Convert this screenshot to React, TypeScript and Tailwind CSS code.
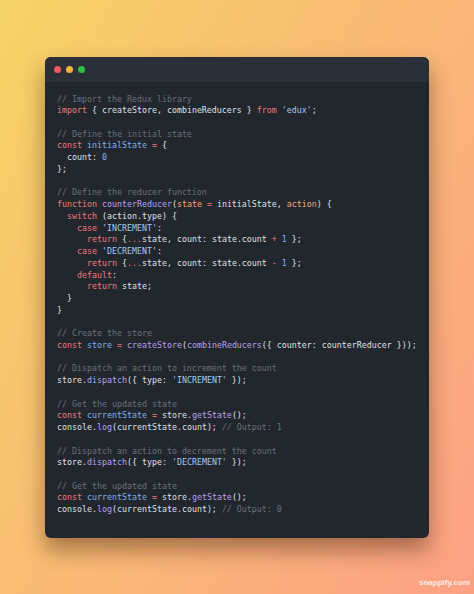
import React from "react";

type Tok = [string, string];

const C = {
  c: "text-[#6a717c]",
  k: "text-[#f07a7f]",
  f: "text-[#b9a0ec]",
  v: "text-[#7fb2f0]",
  s: "text-[#a3c9f5]",
  p: "text-[#f3ad74]",
  t: "text-[#dfe2e7]",
};

// each line is a list of [text, colour key]
const lines: Tok[][] = [
  [["// Import the Redux library", "c"]],
  [["import", "k"], [" { createStore, combineReducers } ", "t"], ["from", "k"], [" ", "t"], ["'edux'", "s"], [";", "t"]],
  [],
  [["// Define the initial state", "c"]],
  [["const", "k"], [" ", "t"], ["initialState", "v"], [" ", "t"], ["=", "k"], [" {", "t"]],
  [["  count: ", "t"], ["0", "v"]],
  [["};", "t"]],
  [],
  [["// Define the reducer function", "c"]],
  [["function", "k"], [" ", "t"], ["counterReducer", "f"], ["(", "t"], ["state", "p"], [" ", "t"], ["=", "k"], [" initialState, ", "t"], ["action", "p"], [") {", "t"]],
  [["  ", "t"], ["switch", "k"], [" (action.type) {", "t"]],
  [["    ", "t"], ["case", "k"], [" ", "t"], ["'INCREMENT'", "s"], [":", "t"]],
  [["      ", "t"], ["return", "k"], [" {", "t"], ["...", "k"], ["state, count: state.count ", "t"], ["+", "k"], [" ", "t"], ["1", "v"], [" };", "t"]],
  [["    ", "t"], ["case", "k"], [" ", "t"], ["'DECREMENT'", "s"], [":", "t"]],
  [["      ", "t"], ["return", "k"], [" {", "t"], ["...", "k"], ["state, count: state.count ", "t"], ["-", "k"], [" ", "t"], ["1", "v"], [" };", "t"]],
  [["    ", "t"], ["default", "k"], [":", "t"]],
  [["      ", "t"], ["return", "k"], [" state;", "t"]],
  [["  }", "t"]],
  [["}", "t"]],
  [],
  [["// Create the store", "c"]],
  [["const", "k"], [" ", "t"], ["store", "v"], [" ", "t"], ["=", "k"], [" ", "t"], ["createStore", "f"], ["(", "t"], ["combineReducers", "f"], ["({ counter: counterReducer }));", "t"]],
  [],
  [["// Dispatch an action to increment the count", "c"]],
  [["store.", "t"], ["dispatch", "f"], ["({ type: ", "t"], ["'INCREMENT'", "s"], [" });", "t"]],
  [],
  [["// Get the updated state", "c"]],
  [["const", "k"], [" ", "t"], ["currentState", "v"], [" ", "t"], ["=", "k"], [" store.", "t"], ["getState", "f"], ["();", "t"]],
  [["console.", "t"], ["log", "f"], ["(currentState.count); ", "t"], ["// Output: 1", "c"]],
  [],
  [["// Dispatch an action to decrement the count", "c"]],
  [["store.", "t"], ["dispatch", "f"], ["({ type: ", "t"], ["'DECREMENT'", "s"], [" });", "t"]],
  [],
  [["// Get the updated state", "c"]],
  [["const", "k"], [" ", "t"], ["currentState", "v"], [" ", "t"], ["=", "k"], [" store.", "t"], ["getState", "f"], ["();", "t"]],
  [["console.", "t"], ["log", "f"], ["(currentState.count); ", "t"], ["// Output: 0", "c"]],
];

export default function App() {
  return (
    <div className="relative flex h-[594px] w-full items-center justify-center bg-[linear-gradient(120deg,#f6d365_0%,#fda085_100%)]">
      <div className="flex h-[481px] w-[384px] flex-col overflow-hidden rounded-[6px] bg-[#22262d] shadow-[0_12px_22px_rgba(60,30,10,0.45)]">
        <div className="flex h-[25px] items-center gap-[5px] bg-[#2b2f37] pl-[9px]">
          <span className="h-[7px] w-[7px] rounded-full bg-[#f25a5f]" />
          <span className="h-[7px] w-[7px] rounded-full bg-[#f5b53c]" />
          <span className="h-[7px] w-[7px] rounded-full bg-[#2fc046]" />
        </div>
        <pre className="px-[12px] pt-[12px] font-['DejaVu_Sans_Mono',monospace] text-[8.3px] leading-[11.74px]">
          {lines.map((line, i) => (
            <div key={i} className="h-[11.74px] whitespace-pre">
              {line.map(([text, col], j) => (
                <span key={j} className={C[col as keyof typeof C]}>
                  {text}
                </span>
              ))}
            </div>
          ))}
        </pre>
      </div>
      <span className="absolute bottom-[5px] right-[4px] font-['Liberation_Sans',sans-serif] text-[8px] font-bold text-white/80">
        snappify.com
      </span>
    </div>
  );
}
